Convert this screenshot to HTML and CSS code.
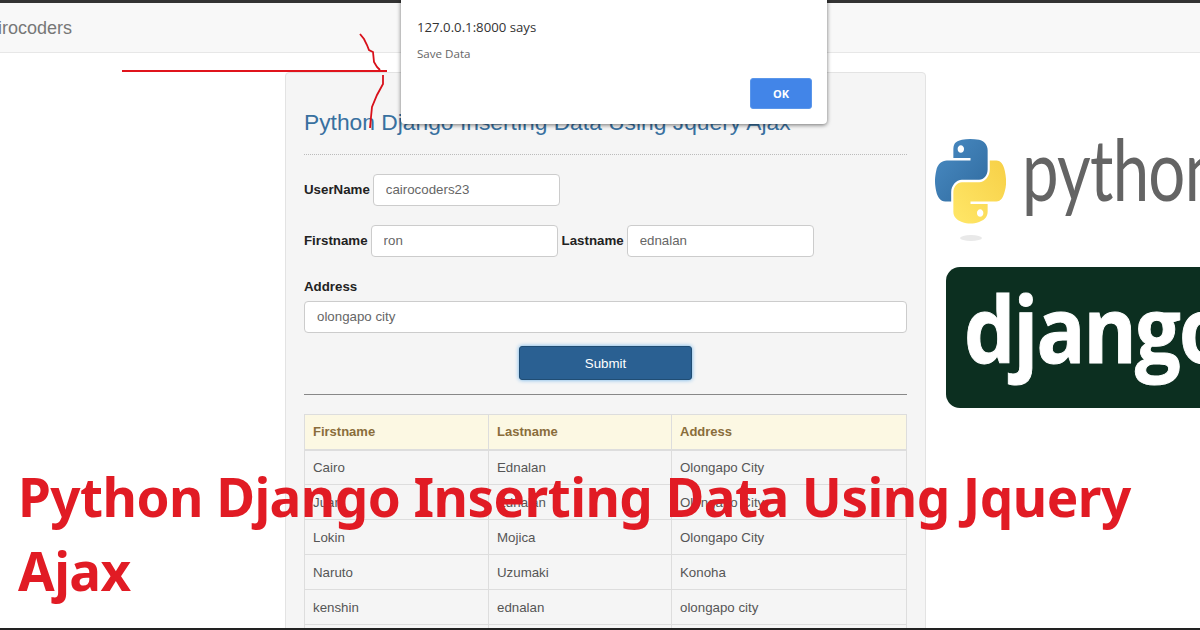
FILE: index.html
```html
<!DOCTYPE html>
<html lang="en">
<head>
  <meta charset="UTF-8">
  <title>Python Django Inserting Data Using Jquery Ajax</title>
  <link rel="stylesheet" href="styles.css">
</head>
<body>
  <div class="topbar"></div>
  <nav class="navbar"><span class="brand">cairocoders</span></nav>

  <div class="main">
    <div class="panel">
      <h2>Python Django Inserting Data Using Jquery Ajax</h2>
      <form>
        <div class="row row-user">
          <label>UserName</label>
          <input type="text" value="cairocoders23">
        </div>
        <div class="row row-name">
          <label>Firstname</label>
          <input type="text" value="ron">
          <label>Lastname</label>
          <input type="text" value="ednalan">
        </div>
        <label class="block-label">Address</label>
        <input type="text" class="wide" value="olongapo city">
        <button type="button" class="submit">Submit</button>
      </form>
      <hr>
      <table>
        <thead>
          <tr><th class="col1">Firstname</th><th class="col2">Lastname</th><th>Address</th></tr>
        </thead>
        <tbody>
          <tr><td>Cairo</td><td>Ednalan</td><td>Olongapo City</td></tr>
          <tr><td>Juan</td><td>Ednalan</td><td>Olongapo City</td></tr>
          <tr><td>Lokin</td><td>Mojica</td><td>Olongapo City</td></tr>
          <tr><td>Naruto</td><td>Uzumaki</td><td>Konoha</td></tr>
          <tr><td>kenshin</td><td>ednalan</td><td>olongapo city</td></tr>
          <tr><td></td><td></td><td></td></tr>
        </tbody>
      </table>
    </div>

    <div class="logos">
      <div class="python-logo">
        <div class="snake-wrap">
          <svg class="snakes" width="71" height="85" viewBox="0 0 111 113" preserveAspectRatio="none">
            <defs>
              <linearGradient id="blue" x1="0" y1="0" x2="1" y2="1">
                <stop offset="0" stop-color="#4a8cc4"/>
                <stop offset="1" stop-color="#2f6a9e"/>
              </linearGradient>
              <linearGradient id="yellow" x1="0" y1="1" x2="1" y2="0">
                <stop offset="0" stop-color="#ffe768"/>
                <stop offset="1" stop-color="#f7d047"/>
              </linearGradient>
            </defs>
            <path fill="url(#blue)" fill-rule="evenodd" d="M54.9 0C50.3 0 46 .4 42.1 1.1 30.8 3.1 28.7 7.3 28.7 15v10.3h26.8v3.4H18.6C10.8 28.7 4 33.3 1.9 42.3c-2.5 10.2-2.6 16.5 0 27.2C3.8 77.4 8.3 83 16.1 83h9.2V70.8c0-8.9 7.7-16.7 16.8-16.7h26.8c7.4 0 13.4-6.1 13.4-13.6V15c0-7.3-6.1-12.7-13.4-13.9C64.3.3 59.5 0 54.9 0zM40.4 8.2c2.8 0 5 2.3 5 5.1s-2.2 5.1-5 5.1-5-2.3-5-5.1 2.2-5.1 5-5.1z"/>
            <path fill="url(#yellow)" fill-rule="evenodd" d="M85.6 28.7v11.9c0 9.2-7.8 17-16.7 17H42.1c-7.3 0-13.4 6.3-13.4 13.6v25.5c0 7.3 6.3 11.5 13.4 13.6 8.5 2.5 16.7 3 26.8 0 6.7-1.9 13.4-5.9 13.4-13.6V86.5H55.5v-3.4h40.2c7.8 0 10.7-5.4 13.4-13.6 2.8-8.4 2.7-16.5 0-27.2-1.9-7.8-5.6-13.6-13.4-13.6zM70.6 93.3c2.8 0 5 2.3 5 5.1s-2.2 5.1-5 5.1-5-2.3-5-5.1 2.2-5.1 5-5.1z"/>
          </svg>
          <div class="snake-shadow"></div>
        </div>
        <span class="python-word">python</span>
      </div>
      <div class="django-logo"><span>django</span></div>
    </div>
  </div>

  <svg class="arrow" width="400" height="140" viewBox="0 0 400 140">
    <path d="M122 71H387" fill="none" stroke="#e0141c" stroke-width="2"/>
    <path d="M360 34l4 5 3 6 2 5 4 2 1 10 3 5 3 3M383 75v9l-6 11-5 12-1 10-1 11" fill="none" stroke="#d8101a" stroke-width="1.8"/>
  </svg>

  <div class="alert">
    <div class="alert-origin">127.0.0.1:8000 says</div>
    <div class="alert-msg">Save Data</div>
    <div class="alert-actions"><button type="button" class="alert-ok">OK</button></div>
  </div>

  <div class="caption">Python Django Inserting Data Using Jquery Ajax</div>
  <div class="bottom-bar"></div>
</body>
</html>
```

FILE: styles.css
```css
html {
  height: 630px;
  overflow: hidden;
}
body {
  position: relative;
  margin: 0;
  width: 1200px;
  height: 630px;
  background: #fff;
  font-family: "Liberation Sans", Arial, sans-serif;
  font-size: 13.3px;
  color: #333;
}

.topbar {
  height: 3px;
  background: #333;
}
.navbar {
  height: 47px;
  padding-top: 2px;
  background: #f8f8f8;
  border-bottom: 1px solid #e7e7e7;
  display: flex;
  align-items: center;
}
.brand {
  margin-left: -21px;
  font-size: 18px;
  color: #777;
}

.main {
  display: flex;
  height: 577px;
  overflow: hidden;
  padding: 19px 0 0 285px;
  box-sizing: border-box;
}
.panel {
  flex: none;
  width: 641px;
  height: 600px;
  box-sizing: border-box;
  padding: 0 18px;
  background: #f5f5f5;
  border: 1px solid #e3e3e3;
  border-radius: 4px;
}
h2 {
  margin: 36px 0 0;
  padding-bottom: 18px;
  font-size: 22.8px;
  font-weight: normal;
  line-height: 27px;
  color: #38709f;
  border-bottom: 1px dotted #bbb;
}

.row {
  display: flex;
  align-items: center;
  gap: 3px;
}
.row-user { margin-top: 19px; }
.row-name { margin-top: 19px; }
.row-user input, .row-name input {
  width: 187px;
  margin-right: 1px;
}
.row label { padding-bottom: 2px; }
label {
  font-weight: bold;
  color: #222;
}
.block-label {
  display: block;
  margin-top: 22px;
  margin-bottom: 7px;
  line-height: 15px;
}
input {
  height: 32px;
  box-sizing: border-box;
  padding: 0 12px 1px;
  font-family: inherit;
  font-size: 13.3px;
  color: #666;
  background: #fff;
  border: 1px solid #ccc;
  border-radius: 4px;
}
.wide {
  display: block;
  width: 100%;
}
.submit {
  display: block;
  width: 173px;
  height: 34px;
  margin: 13px auto 0;
  font-family: inherit;
  font-size: 13.3px;
  color: #fff;
  background: #2a6092;
  border: 1px solid #204d74;
  border-radius: 3px;
  box-shadow: 0 0 4px #66afe9;
}
hr {
  margin: 14px 0 19px;
  border: 0;
  border-top: 1px solid #888;
}

table {
  width: 100%;
  border-collapse: collapse;
  table-layout: fixed;
}
th, td {
  padding: 0 8px;
  text-align: left;
  border: 1px solid #ddd;
  height: 35px;
  box-sizing: border-box;
}
th {
  background: #fcf8e3;
  color: #8a6d3b;
  font-size: 13px;
  border-bottom-width: 2px;
}
td { color: #555; }
.col1 { width: 184px; }
.col2 { width: 183px; }

.logos {
  flex: 1;
  min-width: 0;
  overflow: hidden;
  height: 558px;
}
.python-logo {
  display: flex;
  margin: 67px 0 0 9px;
  height: 110px;
}
.snake-wrap {
  flex: none;
  width: 71px;
}
.snakes { display: block; }
.snake-shadow {
  width: 22px;
  height: 6px;
  margin: 11px auto 0;
  background: #e9e9e9;
  border-radius: 50%;
}
.python-word {
  display: inline-block;
  margin: -26px 0 0 16px;
  font-family: "Lato", sans-serif;
  font-size: 86px;
  letter-spacing: -1px;
  line-height: 110px;
  color: #646464;
  transform: scaleX(0.76);
  transform-origin: left;
}
.django-logo {
  height: 141px;
  margin: 18px 0 0 20px;
  padding-left: 18px;
  background: #0c2f20;
  border-radius: 14px 0 0 14px;
  overflow: hidden;
}
.django-logo span {
  display: inline-block;
  font-family: "Open Sans", sans-serif;
  font-size: 92px;
  font-weight: 700;
  line-height: 122px;
  color: #fff;
  letter-spacing: -2px;
  -webkit-text-stroke: 1px #fff;
  transform: scaleX(0.88);
  transform-origin: left;
}

.arrow {
  position: absolute;
  left: 0;
  top: 0;
}

.alert {
  position: absolute;
  left: 401px;
  top: -3px;
  width: 426px;
  height: 127px;
  box-sizing: border-box;
  padding: 22px 16px 0;
  background: #fff;
  border-radius: 4px;
  box-shadow: 0 1px 4px rgba(0,0,0,0.55);
  font-family: "Open Sans", sans-serif;
}
.alert-origin {
  font-size: 13.2px;
  line-height: 17px;
  color: #333;
}
.alert-msg {
  margin-top: 10px;
  font-size: 11.6px;
  line-height: 15px;
  color: #666;
}
.alert-actions {
  display: flex;
  justify-content: flex-end;
  margin-top: 17px;
}
.alert-ok {
  width: 62px;
  height: 31px;
  margin-right: -1px;
  font-family: inherit;
  font-size: 11px;
  font-weight: 700;
  color: #fff;
  background: #4285e8;
  border: 1px solid #5a96ea;
  border-radius: 3px;
}

.caption {
  position: absolute;
  left: 18px;
  top: 460px;
  width: 1170px;
  font-family: "Noto Sans", sans-serif;
  font-size: 53px;
  font-weight: 700;
  letter-spacing: -0.55px;
  line-height: 74px;
  color: #e11b24;
}
.bottom-bar {
  position: absolute;
  left: 0;
  right: 0;
  bottom: 0;
  height: 2px;
  background: #222;
}
```
